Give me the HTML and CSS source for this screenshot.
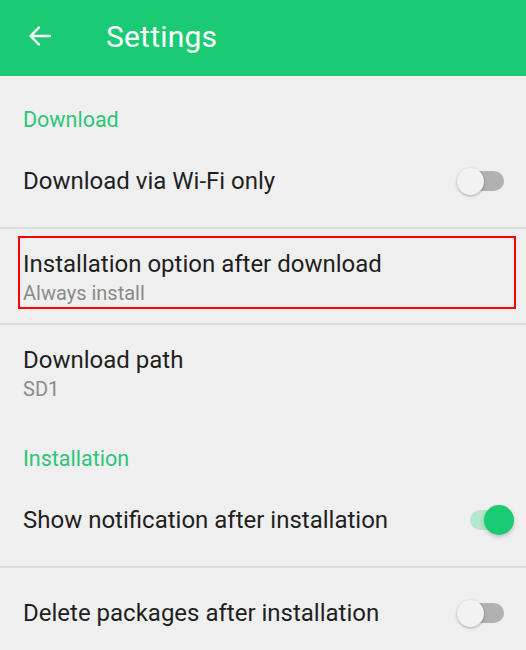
FILE: index.html
```html
<!DOCTYPE html>
<html>
<head>
<meta charset="utf-8">
<link rel="stylesheet" href="styles.css">
</head>
<body>
<div class="app">
  <header class="topbar">
    <svg class="back" width="26" height="26" viewBox="0 0 26 26"><path d="M23 13H4M12 4.5L3.5 13 12 21.5" fill="none" stroke="#fff" stroke-width="2.4" stroke-linecap="round" stroke-linejoin="round"/></svg>
    <h1 class="title">Settings</h1>
  </header>

  <div class="section">Download</div>
  <div class="row">
    <div class="text"><div class="label">Download via Wi-Fi only</div></div>
    <div class="switch off"><span class="thumb"></span></div>
  </div>
  <div class="row two divided highlighted">
    <div class="text">
      <div class="label">Installation option after download</div>
      <div class="sub">Always install</div>
    </div>
    <div class="mark"></div>
  </div>
  <div class="row two divided">
    <div class="text">
      <div class="label">Download path</div>
      <div class="sub">SD1</div>
    </div>
  </div>

  <div class="section second">Installation</div>
  <div class="row">
    <div class="text"><div class="label">Show notification after installation</div></div>
    <div class="switch on"><span class="thumb"></span></div>
  </div>
  <div class="row divided">
    <div class="text"><div class="label">Delete packages after installation</div></div>
    <div class="switch off"><span class="thumb"></span></div>
  </div>
</div>
</body>
</html>
```

FILE: styles.css
```css
html, body {
  margin: 0;
  padding: 0;
  background: #efefef;
}
body {
  font-family: Roboto, "Noto Sans", sans-serif;
  color: #1d1d1d;
}
.app {
  width: 526px;
  height: 650px;
  overflow: hidden;
  background: #efefef;
}
.topbar {
  height: 76px;
  background: #1bcb74;
  display: flex;
  align-items: center;
  padding-left: 27px;
  box-sizing: border-box;
}
.back {
  display: block;
  margin-top: -4px;
}
.title {
  margin: -4px 0 0 53px;
  font-size: 30px;
  font-weight: 400;
  color: #fff;
  letter-spacing: 0.2px;
}
.section {
  height: 59px;
  padding: 0 23px;
  display: flex;
  align-items: flex-end;
  box-sizing: border-box;
  font-size: 21.5px;
  line-height: 30px;
  color: #2bc678;
}
.section.second {
  height: 55px;
}
.row {
  position: relative;
  height: 92px;
  padding: 0 23px;
  display: flex;
  align-items: center;
  justify-content: space-between;
  box-sizing: border-box;
}
.row.divided {
  border-top: 2px solid #dcdcdc;
}
.row.two {
  height: 96px;
  align-items: flex-start;
  padding-top: 20px;
}
.label {
  font-size: 24px;
  line-height: 30px;
  color: #1f1f1f;
}
.sub {
  font-size: 20px;
  line-height: 28px;
  color: #8a8a8a;
}
.mark {
  position: absolute;
  left: 18px;
  top: 7px;
  width: 498px;
  height: 73px;
  border: 2px solid #f00;
  box-sizing: border-box;
}
.switch {
  position: relative;
  width: 44px;
  height: 20px;
  border-radius: 10px;
  margin-right: -1px;
}
.switch.off {
  background: #b1b1b1;
}
.switch.on {
  background: #b4e6cb;
  margin-right: -11px;
}
.thumb {
  position: absolute;
  top: 50%;
  width: 27px;
  height: 27px;
  margin-top: -13.5px;
  border-radius: 50%;
}
.switch.off .thumb {
  left: -3px;
  background: #f2f2f2;
  box-shadow: 0 1px 3px rgba(0,0,0,0.3);
}
.switch.on .thumb {
  right: 0;
  width: 30px;
  height: 30px;
  margin-top: -15px;
  background: #1bcb74;
  box-shadow: 0 2px 4px rgba(0,0,0,0.2);
}
```
